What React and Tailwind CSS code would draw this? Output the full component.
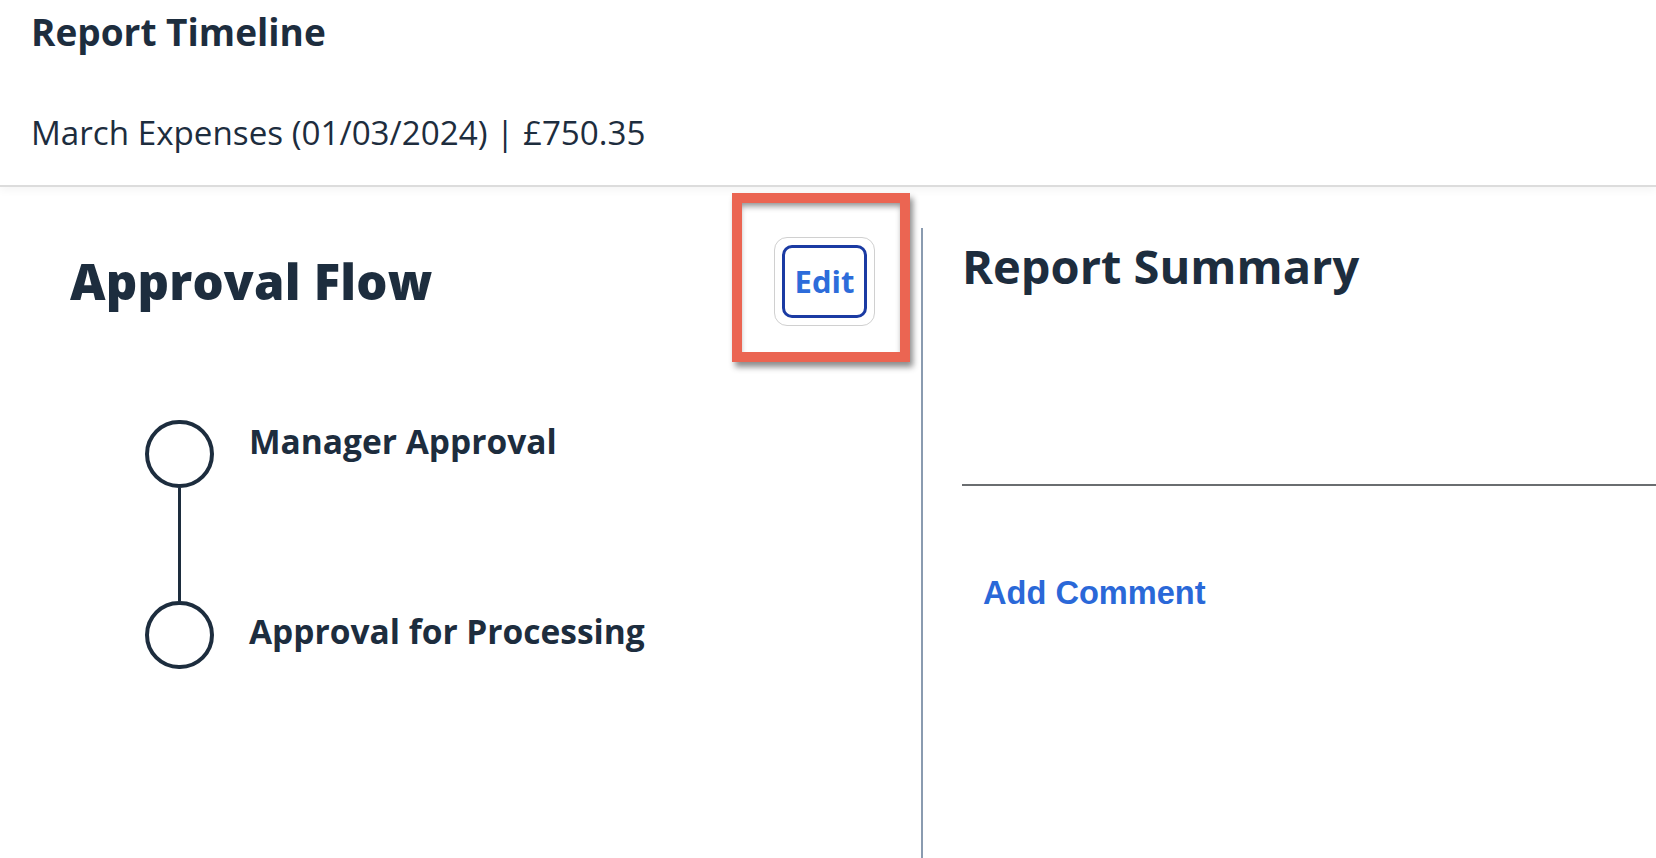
import React from "react";

const steps = ["Manager Approval", "Approval for Processing"];

const App = () => {
  return (
    <div className="min-h-screen bg-white text-[#1d2d3e] font-['Open_Sans',sans-serif] overflow-hidden">
      {/* HEADER */}
      <div className="h-[187px] px-[31px] pt-[8px] border-b-2 border-[#dcdcdc] shadow-[0_4px_8px_rgba(0,0,0,0.04)]">
        <h1 className="text-[37px] leading-[48px] font-bold">Report Timeline</h1>
        <p className="mt-[53px] text-[33.2px] leading-[48px]">March Expenses (01/03/2024) | £750.35</p>
      </div>

      <div className="flex h-[671px]">
        {/* LEFT */}
        <div className="w-[921px] shrink-0">
          <div className="flex items-start justify-between">
            <h2 className="mt-[66px] pl-[70px] text-[49px] leading-[56px] font-extrabold tracking-[0.2px]">
              Approval Flow
            </h2>
            <div className="mt-[6px] mr-[11px] w-[178px] h-[169px] border-[10px] border-[#eb6552] shadow-[3px_5px_6px_rgba(0,0,0,0.45),inset_0_5px_6px_-2px_rgba(0,0,0,0.45)] pl-[32px] pt-[34px]">
              <div className="w-[101px] h-[89px] rounded-[13px] border border-[#d0d0d0] p-[7px]">
                <button className="w-full h-full rounded-[10px] border-[3px] border-[#1b3ba3] bg-white text-[#2d6cda] text-[31px] font-bold leading-none font-['Open_Sans',sans-serif]">
                  Edit
                </button>
              </div>
            </div>
          </div>

          {/* TIMELINE */}
          <div className="pl-[145px] mt-[58px]">
            {steps.map((s, i) => (
              <div key={s}>
                {i > 0 && <div className="ml-[33px] w-[3px] h-[113px] bg-[#1d2d3e]" />}
                <div className="flex items-start gap-[35px]">
                  <div className="w-[69px] h-[68px] rounded-full border-4 border-[#1d2d3e] shrink-0" />
                  <span className={(i > 0 ? "mt-[10px]" : "mt-[1px]") + " text-[33.5px] leading-[40px] font-bold"}>{s}</span>
                </div>
              </div>
            ))}
          </div>
        </div>

        {/* RIGHT */}
        <div className="flex-1 mt-[41px] border-l-2 border-[#8a9bb0] pl-[39px]">
          <h2 className="pt-[8px] text-[47px] leading-[60px] font-bold">Report Summary</h2>
          <div className="mt-[188px] h-[2px] bg-[#6a6d70]" />
          <button className="mt-[87px] ml-[21px] text-[32.6px] leading-[40px] font-bold text-[#2a68d8] font-['Liberation_Sans',Arial,sans-serif]">
            Add Comment
          </button>
        </div>
      </div>
    </div>
  );
};

export default App;
